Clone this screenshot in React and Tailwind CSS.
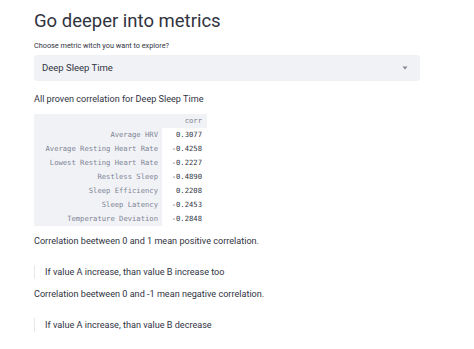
const rows = [
  ['Average HRV', '0.3077'],
  ['Average Resting Heart Rate', '-0.4258'],
  ['Lowest Resting Heart Rate', '-0.2227'],
  ['Restless Sleep', '-0.4890'],
  ['Sleep Efficiency', '0.2208'],
  ['Sleep Latency', '-0.2453'],
  ['Temperature Deviation', '-0.2848'],
];

function App() {
  return (
    <div className="w-[474px] h-[349px] overflow-hidden bg-white text-[#31333f] font-['Roboto',sans-serif]">
      <div className="ml-[34px] w-[386px] pt-[9px]">
        {/* Header */}
        <h1 className="text-[18.5px] leading-[24px]">Go deeper into metrics</h1>

        {/* Select */}
        <p className="mt-[8px] text-[7.3px] leading-[10px]">Choose metric witch you want to explore?</p>
        <div className="mt-[4px] h-[26px] rounded-[3px] bg-[#f0f2f6] flex items-center justify-between pl-[8px] pr-[12px]">
          <span className="text-[9.5px]">Deep Sleep Time</span>
          <svg width="6" height="4" viewBox="0 0 6 4">
            <path d="M0.5 0.5h5L3 3.5z" fill="#808495" />
          </svg>
        </div>

        <p className="mt-[11px] text-[9.1px] leading-[14px]">All proven correlation for Deep Sleep Time</p>

        {/* Table */}
        <table className="mt-[8px] border-collapse font-['DejaVu_Sans_Mono',monospace] text-[7.2px]">
          <thead>
            <tr className="h-[14px] bg-[#f0f2f6]">
              <th className="w-[128px]"></th>
              <th className="w-[45px] text-right pr-[5px] font-normal text-[#808495]">corr</th>
            </tr>
          </thead>
          <tbody>
            {rows.map(([name, val]) => (
              <tr key={name} className="h-[14px]">
                <td className="bg-[#f0f2f6] text-right pr-[4px] text-[#808495]">{name}</td>
                <td className="text-right pr-[5px]">{val}</td>
              </tr>
            ))}
          </tbody>
        </table>

        <p className="mt-[8px] text-[9.1px] leading-[14px]">Correlation beetween 0 and 1 mean positive correlation.</p>
        <blockquote className="mt-[17px] border-l border-[#e6e7ea] pl-[10px] text-[9.1px] leading-[14px]">
          If value A increase, than value B increase too
        </blockquote>
        <p className="mt-[8px] text-[9.1px] leading-[14px]">Correlation beetween 0 and -1 mean negative correlation.</p>
        <blockquote className="mt-[17px] border-l border-[#e6e7ea] pl-[10px] text-[9.1px] leading-[14px]">
          If value A increase, than value B decrease
        </blockquote>
      </div>
    </div>
  );
}

export default App;
